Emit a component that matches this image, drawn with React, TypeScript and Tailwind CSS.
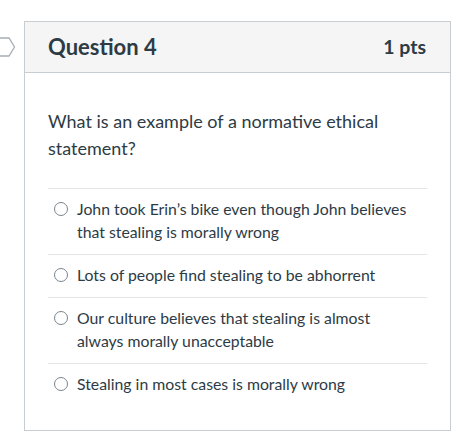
const options = [
  "John took Erin’s bike even though John believes that stealing is morally wrong",
  "Lots of people find stealing to be abhorrent",
  "Our culture believes that stealing is almost always morally unacceptable",
  "Stealing in most cases is morally wrong",
];

function Bookmark() {
  return (
    <svg width="16" height="20" viewBox="0 0 16 20" className="absolute left-0 top-[37px]">
      <path d="M-4 1 H9 L14.5 10 L9 19 H-4" fill="white" stroke="#a5afb5" strokeWidth="1.3" />
    </svg>
  );
}

export default function App() {
  return (
    <div
      className="relative w-[474px] h-[440px] bg-white pt-[21px] pl-[24px] text-[#2d3b45]"
      style={{ fontFamily: "Lato, 'Liberation Sans', sans-serif" }}
    >
      <Bookmark />
      <div className="w-[427px] border border-[#c7cdd1]">
        <div className="h-[51px] flex items-center justify-between bg-[#f5f5f5] border-b border-[#c7cdd1] pl-[23px] pr-[24px]">
          <span className="text-[22px] font-bold leading-none">Question 4</span>
          <span className="text-[19.5px] font-bold leading-none">1 pts</span>
        </div>
        <div className="pl-[23px] pr-[23px] pt-[35px] pb-[24px]">
          <p className="text-[18px] leading-[27px] pb-[26px]">
            What is an example of a normative ethical
            <br />
            statement?
          </p>
          {options.map((o) => (
            <div key={o} className="flex border-t border-[#e3e5e7] pt-[8px] pb-[11px] pl-[6px]">
              <span className="mt-[5px] w-[14px] h-[14px] rounded-full border border-[#7b858c] shrink-0" />
              <span className="ml-[9px] text-[15.8px] leading-[23px] w-[340px]">{o}</span>
            </div>
          ))}
        </div>
      </div>
    </div>
  );
}
